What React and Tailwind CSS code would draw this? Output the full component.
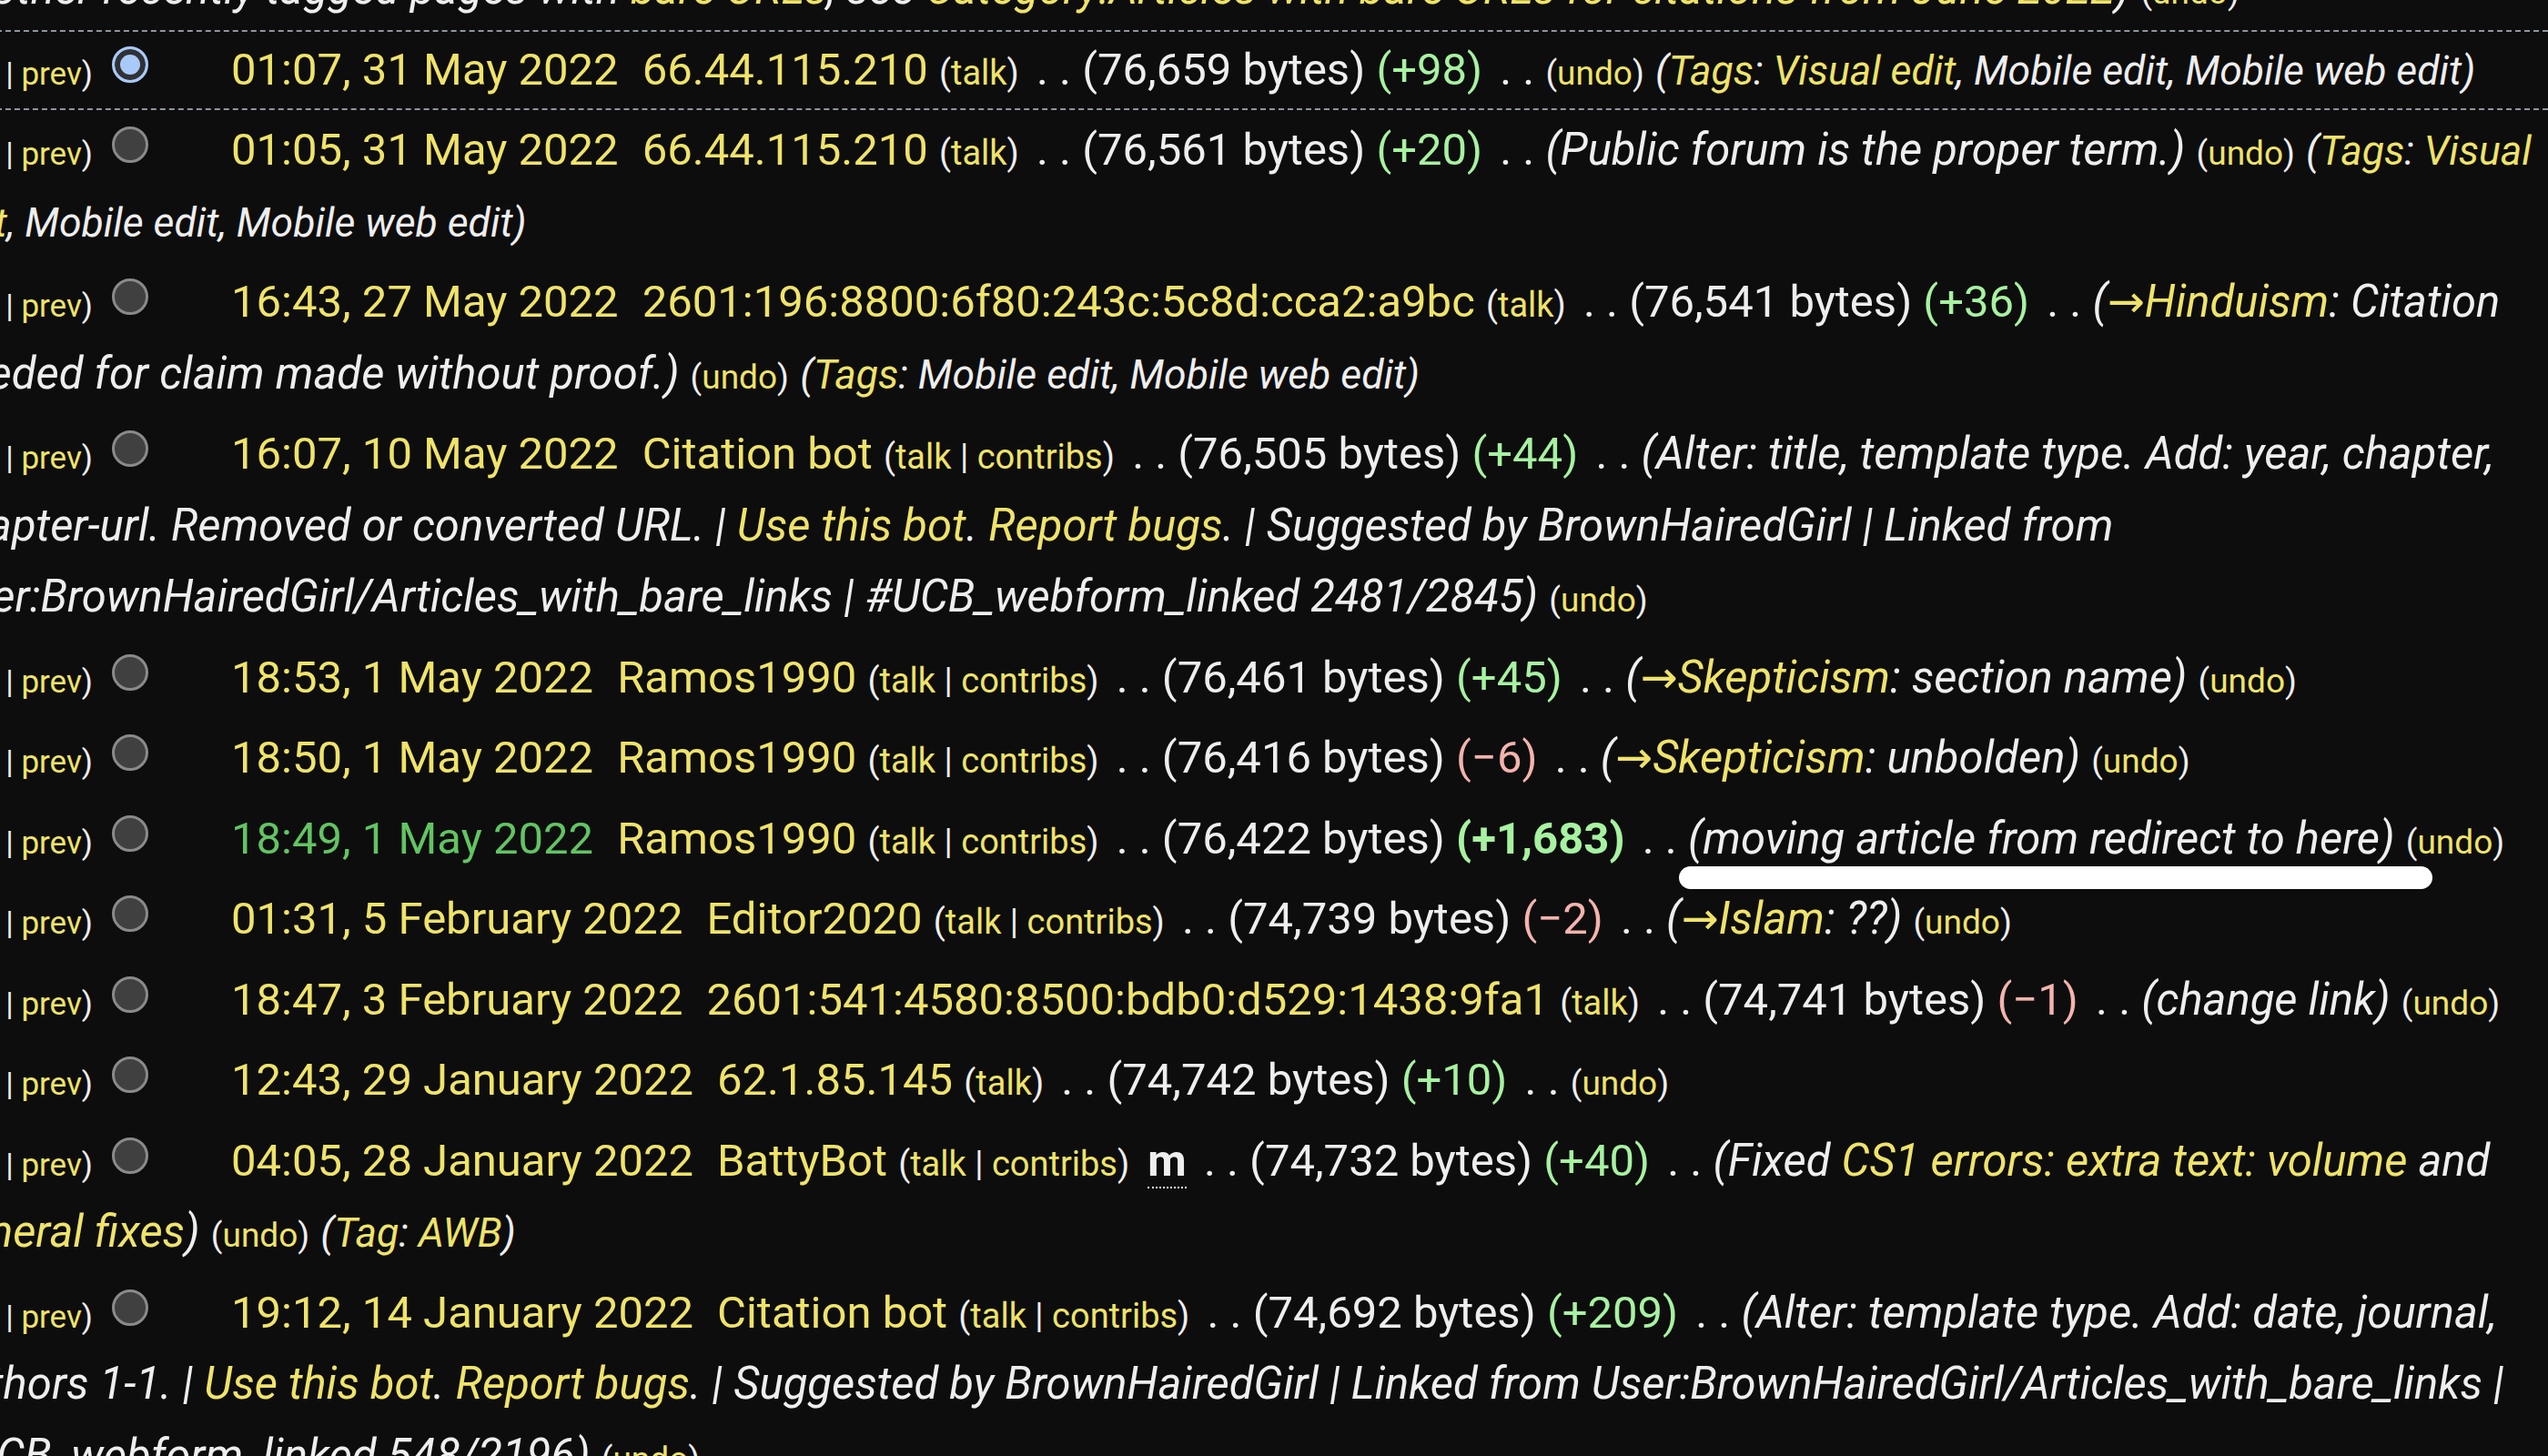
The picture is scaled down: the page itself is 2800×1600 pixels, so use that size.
import React from 'react';

const Y = ({ children, className = '' }) => <span className={`text-[#efe36a] ${className}`}>{children}</span>;

const Hist = () => (
  <span className="text-[35px] leading-none">(cur | <Y>prev</Y>)</span>
);

const Radio = ({ on }) =>
  on ? (
    <span className="inline-block ml-[21px] h-[40px] w-[40px] rounded-full border-[3px] border-[#a9c9f8] bg-[#a9c9f8] shadow-[inset_0_0_0_6px_#2f3236] align-[2px]" />
  ) : (
    <span className="inline-block ml-[21px] h-[40px] w-[40px] rounded-full border-[3px] border-[#8a8a8a] bg-[#404040] align-[2px]" />
  );

const Gap = () => <span className="inline-block w-[91px]" />;

const User = ({ name, contribs }) => (
  <>
    <Y className="ml-[26px]">{name}</Y>{' '}
    <span className="text-[38px] leading-none">
      (<Y>talk</Y>
      {contribs && (
        <>
          {' | '}
          <Y>contribs</Y>
        </>
      )}
      )
    </span>
  </>
);

const Sep = () => (
  <>
    {' '}
    <span className="ml-[7px]">. .</span>{' '}
  </>
);

const Diff = ({ v, neg, bold }) => (
  <span className={neg ? 'text-[#f5b3ad]' : bold ? 'font-bold text-[#a7f2a1]' : 'text-[#a7f2a1]'}>({v})</span>
);

const Undo = () => (
  <span className="text-[37px] leading-none not-italic">
    (<Y>undo</Y>)
  </span>
);

const Tags = ({ children }) => <span className="italic text-[44.5px] leading-none">{children}</span>;

const Row = ({ selected, children }) => (
  <li className={selected ? 'border-y-2 border-dashed border-[#8f959c] py-[3px]' : 'py-[5px]'}>{children}</li>
);

export default function App() {
  return (
    <div
      className="relative w-[2800px] h-[1600px] overflow-hidden bg-[#0d0d0d] text-[#eeeeee] text-[49px] leading-[78.5px]"
      style={{ fontFamily: 'Roboto, "Noto Sans", "DejaVu Sans", sans-serif' }}
    >
      <ul className="-ml-[64px] -mt-[56px] w-[2894px] list-none">
        <li className="py-[5px] whitespace-nowrap pl-[55px]">
          <span className="italic">
            other recently tagged pages with <Y>bare URLs</Y>, see{' '}
            <Y>Category:Articles with bare URLs for citations from June 2022</Y>)
          </span>{' '}
          <Undo />
        </li>

        <Row selected>
          <Hist />
          <Radio on />
          <Gap />
          <Y>01:07, 31 May 2022</Y>
          <User name="66.44.115.210" />
          <Sep />
          (76,659 bytes) <Diff v="+98" />
          <Sep />
          <Undo />{' '}
          <Tags>
            (<Y>Tags</Y>: <Y>Visual edit</Y>, Mobile edit, Mobile web edit)
          </Tags>
        </Row>

        <Row>
          <Hist />
          <Radio />
          <Gap />
          <Y>01:05, 31 May 2022</Y>
          <User name="66.44.115.210" />
          <Sep />
          (76,561 bytes) <Diff v="+20" />
          <Sep />
          <span className="italic">(Public forum is the proper term.)</span> <Undo />{' '}
          <Tags>
            (<Y>Tags</Y>: <Y>Visual edit</Y>, Mobile edit, Mobile web edit)
          </Tags>
        </Row>

        <Row>
          <Hist />
          <Radio />
          <Gap />
          <Y>16:43, 27 May 2022</Y>
          <User name="2601:196:8800:6f80:243c:5c8d:cca2:a9bc" />
          <Sep />
          (76,541 bytes) <Diff v="+36" />
          <Sep />
          <span className="italic">
            (<Y>→Hinduism</Y>: Citation needed for claim made without proof.)
          </span>{' '}
          <Undo />{' '}
          <Tags>
            (<Y>Tags</Y>: Mobile edit, Mobile web edit)
          </Tags>
        </Row>

        <Row>
          <Hist />
          <Radio />
          <Gap />
          <Y>16:07, 10 May 2022</Y>
          <User name="Citation bot" contribs />
          <Sep />
          (76,505 bytes) <Diff v="+44" />
          <Sep />
          <span className="italic">
            (Alter: title, template type. Add: year, chapter, chapter-url. Removed or converted URL. |{' '}
            <Y>Use this bot</Y>. <Y>Report bugs</Y>. | Suggested by BrownHairedGirl | Linked from
            User:BrownHairedGirl/Articles_with_bare_links | #UCB_webform_linked 2481/2845)
          </span>{' '}
          <Undo />
        </Row>

        <Row>
          <Hist />
          <Radio />
          <Gap />
          <Y>18:53, 1 May 2022</Y>
          <User name="Ramos1990" contribs />
          <Sep />
          (76,461 bytes) <Diff v="+45" />
          <Sep />
          <span className="italic">
            (<Y>→Skepticism</Y>: section name)
          </span>{' '}
          <Undo />
        </Row>

        <Row>
          <Hist />
          <Radio />
          <Gap />
          <Y>18:50, 1 May 2022</Y>
          <User name="Ramos1990" contribs />
          <Sep />
          (76,416 bytes) <Diff v="−6" neg />
          <Sep />
          <span className="italic">
            (<Y>→Skepticism</Y>: unbolden)
          </span>{' '}
          <Undo />
        </Row>

        <Row>
          <Hist />
          <Radio />
          <Gap />
          <span className="text-[#62c463]">18:49, 1 May 2022</span>
          <User name="Ramos1990" contribs />
          <Sep />
          (76,422 bytes) <Diff v="+1,683" bold />
          <Sep />
          <span className="italic">(moving article from redirect to here)</span> <Undo />
        </Row>

        <Row>
          <Hist />
          <Radio />
          <Gap />
          <Y>01:31, 5 February 2022</Y>
          <User name="Editor2020" contribs />
          <Sep />
          (74,739 bytes) <Diff v="−2" neg />
          <Sep />
          <span className="italic">
            (<Y>→Islam</Y>: ??)
          </span>{' '}
          <Undo />
        </Row>

        <Row>
          <Hist />
          <Radio />
          <Gap />
          <Y>18:47, 3 February 2022</Y>
          <User name="2601:541:4580:8500:bdb0:d529:1438:9fa1" />
          <Sep />
          (74,741 bytes) <Diff v="−1" neg />
          <Sep />
          <span className="italic">(change link)</span> <Undo />
        </Row>

        <Row>
          <Hist />
          <Radio />
          <Gap />
          <Y>12:43, 29 January 2022</Y>
          <User name="62.1.85.145" />
          <Sep />
          (74,742 bytes) <Diff v="+10" />
          <Sep />
          <Undo />
        </Row>

        <Row>
          <Hist />
          <Radio />
          <Gap />
          <Y>04:05, 28 January 2022</Y>
          <User name="BattyBot" contribs />{' '}
          <abbr className="ml-[8px] font-bold no-underline border-b-[2px] border-dotted border-[#eeeeee]">m</abbr>
          <Sep />
          (74,732 bytes) <Diff v="+40" />
          <Sep />
          <span className="italic">
            (Fixed <Y>CS1 errors: extra text: volume</Y> and <Y>general fixes</Y>)
          </span>{' '}
          <Undo />{' '}
          <Tags>
            (<Y>Tag</Y>: <Y>AWB</Y>)
          </Tags>
        </Row>

        <Row>
          <Hist />
          <Radio />
          <Gap />
          <Y>19:12, 14 January 2022</Y>
          <User name="Citation bot" contribs />
          <Sep />
          (74,692 bytes) <Diff v="+209" />
          <Sep />
          <span className="italic">
            (Alter: template type. Add: date, journal, authors 1-1. | <Y>Use this bot</Y>. <Y>Report bugs</Y>. |
            Suggested by BrownHairedGirl | Linked from User:BrownHairedGirl/Articles_with_bare_links |
            #UCB_webform_linked 548/2196)
          </span>{' '}
          <Undo />
        </Row>
      </ul>

      <div className="absolute left-[1845px] top-[952px] h-[25px] w-[828px] rounded-full bg-white" />
    </div>
  );
}
